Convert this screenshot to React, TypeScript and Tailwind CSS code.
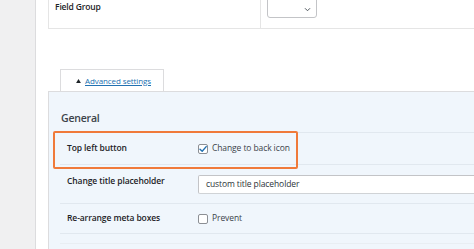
import React from "react";

const font = { fontFamily: '"Open Sans", "Noto Sans", sans-serif' };

function Check({ checked }: { checked?: boolean }) {
  return (
    <span className="relative flex h-[10px] w-[10px] items-center justify-center rounded-[2px] border border-[#8c8f94] bg-white">
      {checked && (
        <svg viewBox="0 0 10 10" className="absolute h-[10px] w-[10px]">
          <path d="M2 5.2 L4.2 7.3 L8.2 2.6" fill="none" stroke="#2271b1" strokeWidth="1.4" strokeLinecap="round" strokeLinejoin="round" />
        </svg>
      )}
    </span>
  );
}

export default function App() {
  return (
    <div className="flex h-[249px] w-[474px] overflow-hidden bg-white text-[#1d2327]" style={font}>
      <div className="w-[36px] shrink-0 border-r border-[#dcdcde] bg-[#f0f0f1]" />
      <div className="flex flex-1 flex-col pl-[12px] pr-[2px]">
        {/* top card */}
        <div className="flex h-[29px] shrink-0 border-b border-l border-r border-[#e5e5e5] bg-white">
          <div className="w-[212px] border-r border-[#e5e5e5] pl-[6px] pt-[1px] text-[8.5px] font-semibold leading-[12px] tracking-[-0.15px]">
            Field Group
          </div>
          <div className="flex-1 border-r border-[#eeeeee] pl-[6px]">
            <div className="mt-[-4px] flex h-[22px] w-[50px] items-end justify-end rounded-[3px] border border-[#c3c4c7] bg-white pb-[5px] pr-[5px]">
              <svg viewBox="0 0 8 6" className="h-[5px] w-[7px]">
                <path d="M1 1.5 L4 4.5 L7 1.5" fill="none" stroke="#50575e" strokeWidth="1.2" />
              </svg>
            </div>
          </div>
          <div className="w-[7px]" />
        </div>

        <div className="h-[40px] shrink-0" />

        {/* tab */}
        <div className="ml-[12px] flex h-[22px] w-[104px] shrink-0 items-center gap-[4px] border-l border-r border-t border-[#dcdcde] bg-white pl-[15px]">
          <svg viewBox="0 0 6 5" className="h-[4px] w-[5px]">
            <path d="M0 5 L3 0 L6 5 Z" fill="#1d2327" />
          </svg>
          <span className="text-[8px] leading-[12px] tracking-[-0.1px] text-[#2271b1] underline">Advanced settings</span>
        </div>

        {/* panel */}
        <div className="flex flex-1 flex-col border-l border-t border-[#dcdcde] bg-[#f0f6fc]">
          <div className="pl-[12px] pt-[18px] text-[10.5px] font-semibold leading-[16px] tracking-[-0.2px] text-[#3c434a]">General</div>
          <div className="relative ml-[11px] mt-[6px] border-t border-[#e1e8ef] text-[8.5px] tracking-[-0.1px]">
            <div className="flex h-[32px] items-center border-b border-[#e1e8ef]">
              <div className="w-[138px] pl-[7px] font-semibold">Top left button</div>
              <div className="flex items-center gap-[4px] text-[#3c434a]">
                <Check checked />
                <span>Change to back icon</span>
              </div>
            </div>
            <div className="flex h-[39px] items-center border-b border-[#e1e8ef]">
              <div className="mb-[6px] w-[138px] pl-[7px] font-semibold">Change title placeholder</div>
              <div className="flex h-[19px] w-[300px] shrink-0 items-center rounded-[2px] border border-[#c3c4c7] border-b-[#d0d3d6] bg-white pl-[7px] text-[#2c3338]">
                custom title placeholder
              </div>
            </div>
            <div className="flex h-[30px] items-center border-b border-[#e1e8ef]">
              <div className="w-[138px] pl-[7px] font-semibold">Re-arrange meta boxes</div>
              <div className="flex items-center gap-[4px] text-[#3c434a]">
                <Check />
                <span>Prevent</span>
              </div>
            </div>
            <div className="h-[10px] border-b border-[#e9eef3]" />
            <div className="pointer-events-none absolute left-[-7px] top-[-2px] h-[38px] w-[245px] rounded-[2px] border-2 border-[#f07a3a]" />
          </div>
        </div>
      </div>
    </div>
  );
}
